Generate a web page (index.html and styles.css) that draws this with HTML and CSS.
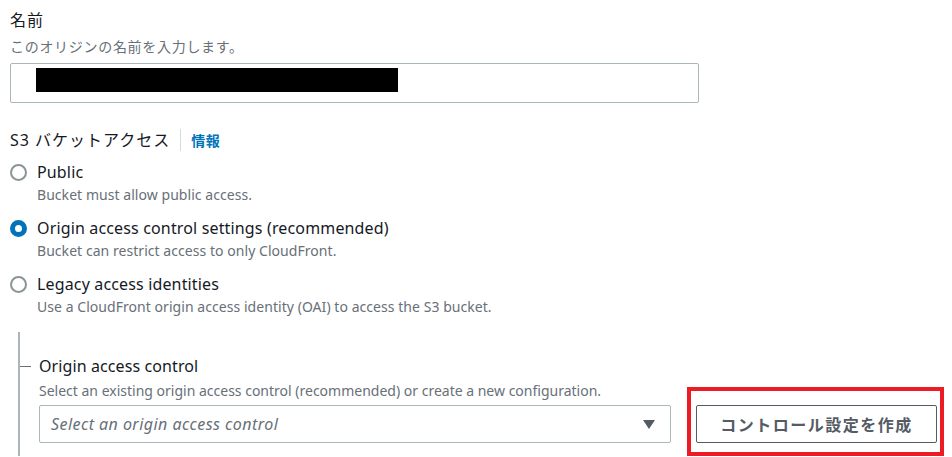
FILE: index.html
```html
<!DOCTYPE html>
<html lang="ja">
<head>
<meta charset="utf-8">
<link rel="stylesheet" href="styles.css">
</head>
<body>
<div class="page">
  <div class="field">
    <div class="label cjk">名前</div>
    <div class="desc cjk">このオリジンの名前を入力します。</div>
    <div class="input"><span class="redact"></span></div>
  </div>

  <div class="field s3">
    <div class="label-row">
      <span class="label cjk">S3 バケットアクセス</span>
      <span class="sep"></span>
      <a class="info">情報</a>
    </div>
    <div class="radios">
      <div class="radio">
        <span class="dot"></span>
        <div class="rtext">
          <div class="rlabel">Public</div>
          <div class="rdesc">Bucket must allow public access.</div>
        </div>
      </div>
      <div class="radio">
        <span class="dot checked"></span>
        <div class="rtext">
          <div class="rlabel">Origin access control settings (recommended)</div>
          <div class="rdesc">Bucket can restrict access to only CloudFront.</div>
        </div>
      </div>
      <div class="radio">
        <span class="dot"></span>
        <div class="rtext">
          <div class="rlabel">Legacy access identities</div>
          <div class="rdesc">Use a CloudFront origin access identity (OAI) to access the S3 bucket.</div>
        </div>
      </div>
    </div>
  </div>

  <div class="nested">
    <div class="sub">
      <div class="sublabel">Origin access control</div>
      <div class="desc en">Select an existing origin access control (recommended) or create a new configuration.</div>
      <div class="select-row">
        <div class="select">
          <span class="placeholder">Select an origin access control</span>
          <svg class="caret" width="12" height="9" viewBox="0 0 12 9"><path d="M0 0 H12 L6 9 Z" fill="#545b64"/></svg>
        </div>
        <div class="btn-wrap">
          <button class="btn">コントロール設定を作成</button>
        </div>
      </div>
    </div>
  </div>
</div>
</body>
</html>
```

FILE: styles.css
```css
* { box-sizing: border-box; }
html, body { margin: 0; padding: 0; background: #ffffff; }
body {
  font-family: "Noto Sans", "Noto Sans CJK JP", sans-serif;
  color: #16191f;
  width: 952px;
  height: 457px;
  overflow: hidden;
}
.page { padding: 9px 0 0 10px; }

.label { font-size: 16px; line-height: 22px; color: #16191f; }
.label.cjk { letter-spacing: 1px; }
.desc { font-size: 14px; line-height: 20px; color: #687078; margin-top: 6px; }
.desc.cjk { letter-spacing: 0.7px; }
.desc.en { margin-top: 4px; }

.input {
  margin-top: 6px;
  width: 689px;
  height: 40px;
  border: 1px solid #aab7b8;
  border-radius: 2px;
  padding: 4px 0 0 25px;
}
.redact { display: block; width: 362px; height: 24px; background: #000; }

.s3 { margin-top: 26px; }
.label-row { display: flex; align-items: center; height: 22px; }
.sep { width: 1px; height: 22px; background: #d5dbdb; margin: 0 10px 0 10px; }
.info { font-size: 14px; font-weight: 700; color: #0073bb; letter-spacing: 0.5px; }

.radios { margin-top: 10px; display: flex; flex-direction: column; gap: 12px; }
.radio { display: flex; align-items: flex-start; }
.dot {
  width: 17px; height: 17px;
  border: 2px solid #879596;
  border-radius: 50%;
  margin: 3px 10px 0 0;
  flex: none;
}
.dot.checked { border: 5px solid #0073bb; }
.rlabel { font-size: 16px; line-height: 22px; color: #16191f; letter-spacing: 0.15px; }
.rdesc { font-size: 14px; line-height: 20px; color: #687078; margin-top: 2px; letter-spacing: 0.05px; }

.nested {
  margin: 15px 0 0 8px;
  border-left: 2px solid #aab7b8;
  padding-top: 23px;
}
.sub { position: relative; padding-left: 19px; }
.sub::before {
  content: "";
  position: absolute;
  left: 0; top: 11px;
  width: 11px; height: 1px;
  background: #687078;
}
.sublabel { font-size: 16px; line-height: 22px; color: #16191f; letter-spacing: 0.1px; }

.select-row { display: flex; align-items: flex-start; margin-top: 4px; }
.select {
  width: 632px;
  height: 38px;
  border: 1px solid #aab7b8;
  border-radius: 2px;
  display: flex;
  align-items: center;
  justify-content: space-between;
  padding: 0 15px 0 11px;
}
.placeholder { font-size: 16px; font-style: italic; color: #687078; letter-spacing: 0.45px; }
.caret { display: block; }

.btn-wrap {
  margin-left: 16px;
  margin-top: -18px;
  border: 4px solid #ed1c24;
  padding: 14px 3px 9px 5px;
}
.btn {
  display: block;
  width: 241px;
  height: 38px;
  border: 1px solid #545b64;
  border-radius: 2px;
  background: #fff;
  font-family: "Noto Sans", "Noto Sans CJK JP", sans-serif;
  font-size: 16px;
  font-weight: 700;
  letter-spacing: 1.5px;
  color: #545b64;
  padding: 0;
}
```
